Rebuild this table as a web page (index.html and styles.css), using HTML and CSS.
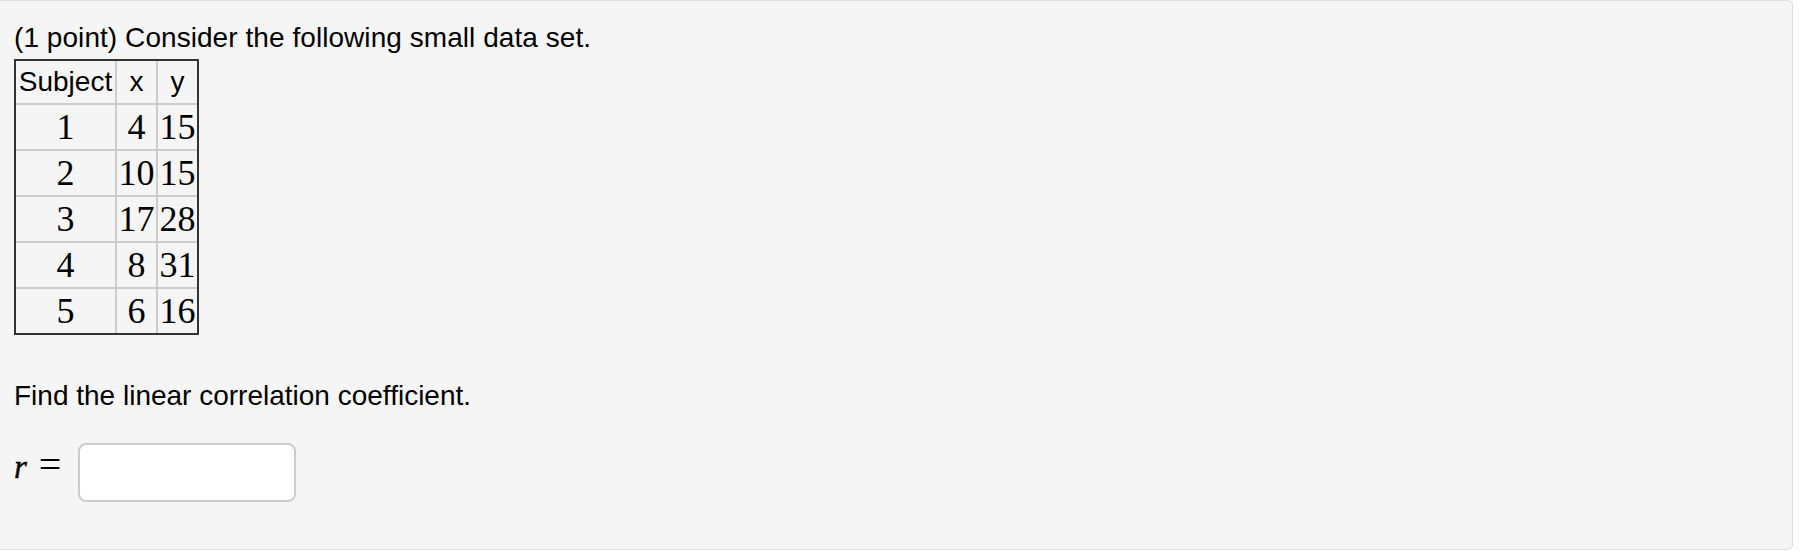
FILE: index.html
```html
<!DOCTYPE html>
<html lang="en">
<head>
<meta charset="utf-8">
<title>Problem</title>
<link rel="stylesheet" href="styles.css">
</head>
<body>
<div class="problem">
  <p class="title">(1 point) Consider the following small data set.</p>
  <table class="data">
    <tr><th class="c1">Subject</th><th class="c2">x</th><th class="c3">y</th></tr>
    <tr><td>1</td><td>4</td><td>15</td></tr>
    <tr><td>2</td><td>10</td><td>15</td></tr>
    <tr><td>3</td><td>17</td><td>28</td></tr>
    <tr><td>4</td><td>8</td><td>31</td></tr>
    <tr><td>5</td><td>6</td><td>16</td></tr>
  </table>
  <p class="question">Find the linear correlation coefficient.</p>
  <div class="answer">
    <span class="math"><span class="var">r</span><span class="eq">=</span></span>
    <input class="field" type="text" aria-label="r">
  </div>
</div>
</body>
</html>
```

FILE: styles.css
```css
html, body {
  margin: 0;
  padding: 0;
  background: #ffffff;
}

.problem {
  box-sizing: border-box;
  width: 1793px;
  height: 550px;
  background: #f5f5f5;
  border: 1px solid #dedede;
  border-left: none;
  border-radius: 0 5px 5px 0;
  padding: 21px 0 0 14px;
  font-family: "Liberation Sans", Arial, sans-serif;
  color: #000;
}

.title,
.question {
  margin: 0;
  font-size: 28px;
  line-height: 32px;
}

.title {
  letter-spacing: 0.06px;
}

.data {
  margin-top: 5px;
  border: 2px solid #333;
  border-collapse: separate;
  border-spacing: 0;
}

.data th,
.data td {
  padding: 0;
  text-align: center;
  border-right: 2px solid #cccccc;
  border-bottom: 2px solid #cccccc;
}

.data th:last-child,
.data td:last-child {
  border-right: none;
}

.data tr:last-child td {
  border-bottom: none;
}

.data th {
  font-family: "Liberation Sans", Arial, sans-serif;
  font-weight: normal;
  font-size: 28px;
  line-height: 42px;
}

.data td {
  font-family: "Liberation Serif", "Times New Roman", serif;
  font-size: 36px;
  line-height: 44px;
}

.c1 { width: 99px; }
.c2, .c3 { width: 39px; }

.question {
  margin-top: 45px;
}

.answer {
  display: flex;
  align-items: center;
  margin-top: 31px;
}

.math {
  font-family: "Liberation Serif", "Times New Roman", serif;
  margin-bottom: 7px;
  line-height: 40px;
}

.var {
  font-style: italic;
  font-size: 33px;
  -webkit-text-stroke: 0.4px #000;
}

.eq {
  font-size: 40px;
  margin-left: 12px;
}

.field {
  box-sizing: border-box;
  width: 218px;
  height: 59px;
  margin-left: 17px;
  border: 2px solid #cccccc;
  border-radius: 8px;
  background: #ffffff;
  outline: none;
}
```
